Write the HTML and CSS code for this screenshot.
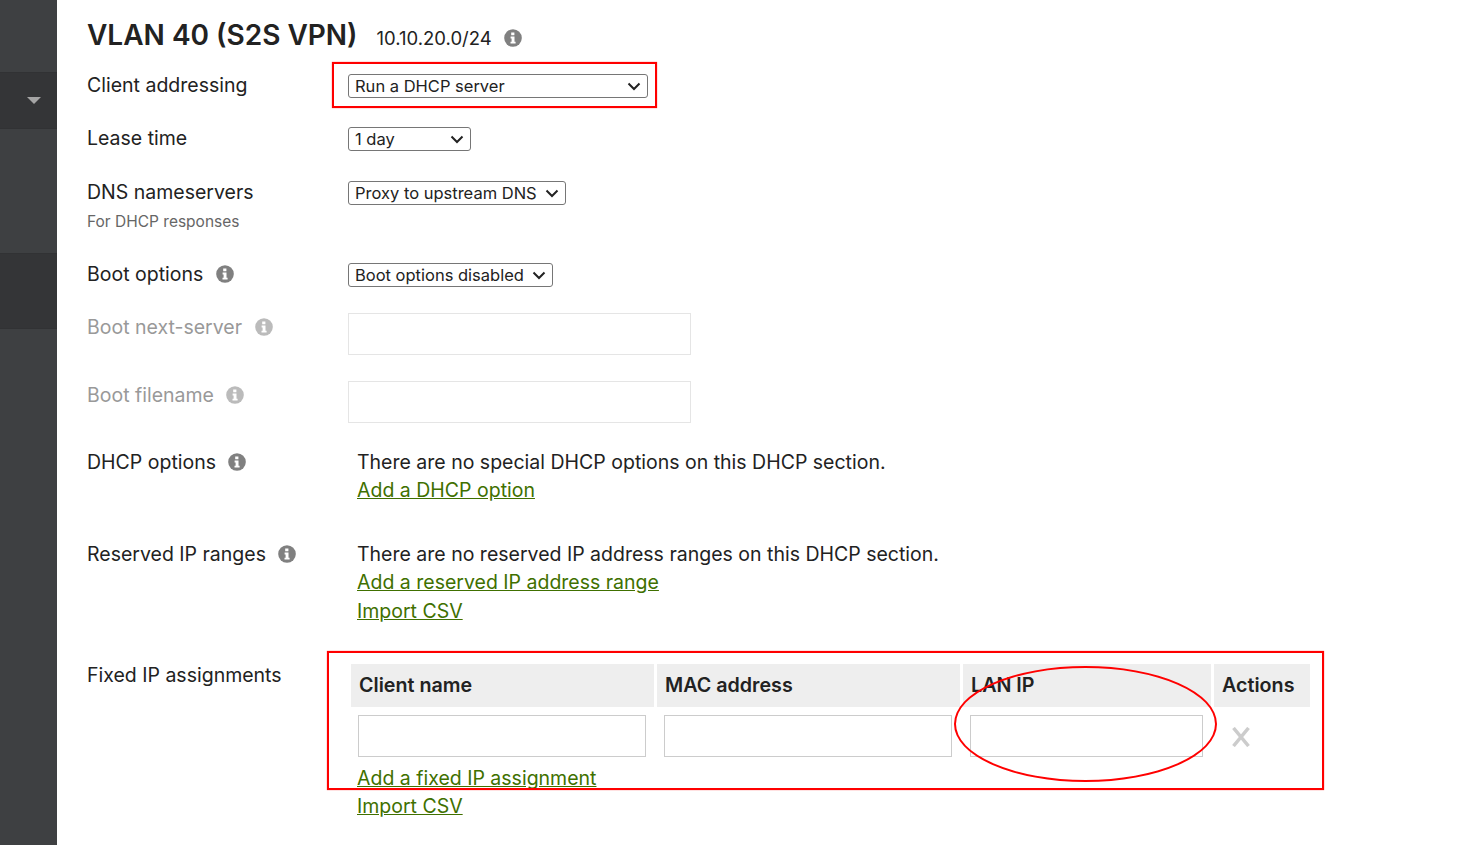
FILE: index.html
```html
<!DOCTYPE html>
<html lang="en">
  <head>
    <meta charset="UTF-8" />
    <meta name="viewport" content="width=device-width, initial-scale=1.0" />
    <title>VLAN 40 DHCP</title>
    <link rel="stylesheet" href="styles.css">
  </head>
  <body>
    <svg class="icon-defs" width="0" height="0" aria-hidden="true">
      <symbol id="info" viewBox="0 0 18 18">
        <circle cx="9" cy="9" r="8.8" fill="currentColor" />
        <path d="M7.2 3.600h3.200v2.700H7.200z M6.600 7.500h3.900v5.200h1.100v1.900H6.500v-1.900h1.100V9.400H6.600z" fill="#fff" />
      </symbol>
    </svg>

    <nav class="sidebar">
      <div class="sidebar-section sidebar-section--top"></div>
      <div class="sidebar-section sidebar-section--active sidebar-section--menu">
        <span class="sidebar-caret"></span>
      </div>
      <div class="sidebar-section sidebar-section--middle"></div>
      <div class="sidebar-section sidebar-section--active sidebar-section--lower"></div>
      <div class="sidebar-section sidebar-section--rest"></div>
    </nav>

    <main class="content">
      <div class="heading">
        <h1 class="heading-title">VLAN 40 (S2S VPN)</h1>
        <span class="heading-subnet">10.10.20.0/24</span>
        <svg class="info"><use href="#info" /></svg>
      </div>

      <div class="row row--select">
        <div class="label">Client addressing</div>
        <div>
          <select class="select select--wide">
            <option>Run a DHCP server</option>
          </select>
        </div>
      </div>

      <div class="row row--lease">
        <div class="label">Lease time</div>
        <div>
          <select class="select select--lease">
            <option>1 day</option>
          </select>
        </div>
      </div>

      <div class="row row--dns">
        <div>
          <div class="label">DNS nameservers</div>
          <div class="label-note">For DHCP responses</div>
        </div>
        <div>
          <select class="select select--dns">
            <option>Proxy to upstream DNS</option>
          </select>
        </div>
      </div>

      <div class="row row--boot">
        <div class="label">Boot options <svg class="info"><use href="#info" /></svg></div>
        <div>
          <select class="select select--boot">
            <option>Boot options disabled</option>
          </select>
        </div>
      </div>

      <div class="row row--input">
        <div class="label label--offset label--disabled">Boot next-server <svg class="info"><use href="#info" /></svg></div>
        <div><input class="text-input text-input--disabled" type="text" /></div>
      </div>

      <div class="row row--filename">
        <div class="label label--offset label--disabled">Boot filename <svg class="info"><use href="#info" /></svg></div>
        <div><input class="text-input text-input--disabled" type="text" /></div>
      </div>

      <div class="row row--options">
        <div class="label label--offset">DHCP options <svg class="info"><use href="#info" /></svg></div>
        <div class="body-text">
          <div>There are no special DHCP options on this DHCP section.</div>
          <div><a href="#">Add a DHCP option</a></div>
        </div>
      </div>

      <div class="row row--ranges">
        <div class="label label--offset">Reserved IP ranges <svg class="info"><use href="#info" /></svg></div>
        <div class="body-text">
          <div>There are no reserved IP address ranges on this DHCP section.</div>
          <div><a href="#">Add a reserved IP address range</a></div>
          <div><a href="#">Import CSV</a></div>
        </div>
      </div>

      <div class="row">
        <div class="label">Fixed IP assignments</div>
        <div>
          <table class="fixed-table">
            <thead>
              <tr>
                <th class="col-name">Client name</th>
                <th class="col-mac">MAC address</th>
                <th class="col-ip">LAN IP</th>
                <th class="col-actions">Actions</th>
              </tr>
            </thead>
            <tbody>
              <tr>
                <td><input class="text-input text-input--cell" type="text" /></td>
                <td><input class="text-input text-input--cell" type="text" /></td>
                <td><input class="text-input text-input--cell" type="text" /></td>
                <td class="cell-remove">
                  <svg class="remove" viewBox="0 0 18 20" width="18" height="20">
                    <path d="M1.500 1 16.500 19 M16.500 1 1.500 19" />
                  </svg>
                </td>
              </tr>
            </tbody>
          </table>
          <div class="body-text body-text--table">
            <div><a href="#">Add a fixed IP assignment</a></div>
            <div><a href="#">Import CSV</a></div>
          </div>
        </div>
      </div>
    </main>

    <!-- red markup drawn over the screenshot -->
    <div class="mark mark--select"></div>
    <div class="mark mark--table"></div>
    <div class="mark mark--ellipse"></div>
  </body>
</html>
```

FILE: styles.css
```css
* {
  box-sizing: border-box;
}

html,
body {
  height: 100%;
}

body {
  margin: 0;
  display: flex;
  overflow: hidden;
  background-color: #ffffff;
  color: #222222;
  font-family: Inter, "Liberation Sans", sans-serif;
}

.icon-defs {
  position: absolute;
}

/* sidebar */
.sidebar {
  width: 57px;
  flex-shrink: 0;
  display: flex;
  flex-direction: column;
  background-color: #3e4042;
}

.sidebar-section--top {
  height: 72px;
  background-color: #3e4042;
}

.sidebar-section--active {
  background-color: #343537;
  border-top: 1px solid #313234;
  border-bottom: 1px solid #313234;
}

.sidebar-section--menu {
  height: 57px;
  padding: 24px 0 0 27px;
}

.sidebar-section--middle {
  height: 124px;
}

.sidebar-section--lower {
  height: 76px;
}

.sidebar-section--rest {
  flex: 1;
}

.sidebar-caret {
  display: block;
  width: 0;
  height: 0;
  border-left: 7px solid transparent;
  border-right: 7px solid transparent;
  border-top: 7px solid #a5a5a5;
}

/* main */
.content {
  flex: 1;
  padding: 16px 0 0 30px;
}

.heading {
  display: flex;
  align-items: center;
  height: 38px;
  margin-bottom: 20px;
}

.heading-title {
  margin: 0;
  font-size: 28px;
  font-weight: 600;
  line-height: 38px;
}

.heading-subnet {
  margin: 6px 12px 0 19px;
  font-size: 18.500px;
}

.heading .info {
  margin: 6px 0 0 0;
}

.row {
  display: grid;
  grid-template-columns: 261px 1fr;
}

.row--select {
  margin-bottom: 29px;
}

.row--lease {
  margin-bottom: 30px;
}

.row--dns {
  height: 82px;
}

.row--boot {
  height: 50px;
}

.row--input {
  height: 68px;
}

.row--filename {
  height: 67px;
}

.row--options {
  height: 92px;
}

.row--ranges {
  height: 124px;
}

.label {
  margin-top: -1px;
  font-size: 19.500px;
  line-height: 24px;
}

.label--offset {
  padding-top: 3px;
}

.label--disabled {
  color: #999999;
}

.label-note {
  margin-top: 8px;
  font-size: 15.500px;
  line-height: 20px;
  color: #666666;
}

.info {
  width: 18px;
  height: 18px;
  margin-left: 7px;
  vertical-align: -2px;
  color: #808080;
}

.label--disabled .info {
  color: #bbbbbb;
}

/* chevron is drawn here so it has the same size on every select */
.select {
  display: block;
  height: 24px;
  padding: 0 6px;
  appearance: none;
  background-color: #ffffff;
  background-image: url("data:image/svg+xml,%3Csvg xmlns='http://www.w3.org/2000/svg' width='14' height='9' viewBox='0 0 14 9'%3E%3Cpath d='M1.500 1.500 7 7l5.500-5.500' fill='none' stroke='%23222' stroke-width='2'/%3E%3C/svg%3E");
  background-repeat: no-repeat;
  background-position: right 6px center;
  border: 1px solid #767676;
  border-radius: 3px;
  color: #222222;
  font-family: Inter, "Liberation Sans", sans-serif;
  font-size: 16.500px;
}

.select--wide {
  width: 300px;
}

.select--lease {
  width: 123px;
}

.select--dns {
  width: 218px;
}

.select--boot {
  width: 205px;
}

.text-input {
  display: block;
  width: 343px;
  height: 42px;
  background-color: #ffffff;
  border: 1px solid #cccccc;
  border-radius: 0;
}

.text-input--disabled {
  border-color: #e5e5e5;
}

.text-input--cell {
  width: 100%;
}

.body-text {
  padding-left: 9px;
  font-size: 19.500px;
  line-height: 28.400px;
}

.body-text--table {
  margin-top: 7px;
}

.body-text a {
  color: #407000;
}

/* fixed ip table */
.fixed-table {
  width: 965px;
  table-layout: fixed;
  border-collapse: separate;
  border-spacing: 3px 0;
}

.fixed-table th {
  height: 43px;
  padding: 0 8px 2px;
  background-color: #eeeeee;
  font-size: 19.700px;
  font-weight: 600;
  text-align: left;
}

.fixed-table td {
  padding: 8px 8px 0 7px;
}

.col-name,
.col-mac {
  width: 303px;
}

.col-ip {
  width: 248px;
}

.col-actions {
  width: 96px;
}

.fixed-table td.cell-remove {
  padding: 9px 0 0 18px;
  vertical-align: middle;
}

.remove {
  display: block;
  fill: none;
  stroke: #cccccc;
  stroke-width: 3.500;
}

/* annotations */
.mark {
  position: absolute;
  border: 2px solid #ff0000;
  box-shadow: 0 0 1px rgba(255, 0, 0, 0.7);
  pointer-events: none;
}

.mark--select {
  left: 332px;
  top: 62px;
  width: 325px;
  height: 46px;
}

.mark--table {
  left: 327px;
  top: 651px;
  width: 997px;
  height: 139px;
}

.mark--ellipse {
  left: 954px;
  top: 666px;
  width: 263px;
  height: 116px;
  border-radius: 50%;
  box-shadow: none;
}
```
